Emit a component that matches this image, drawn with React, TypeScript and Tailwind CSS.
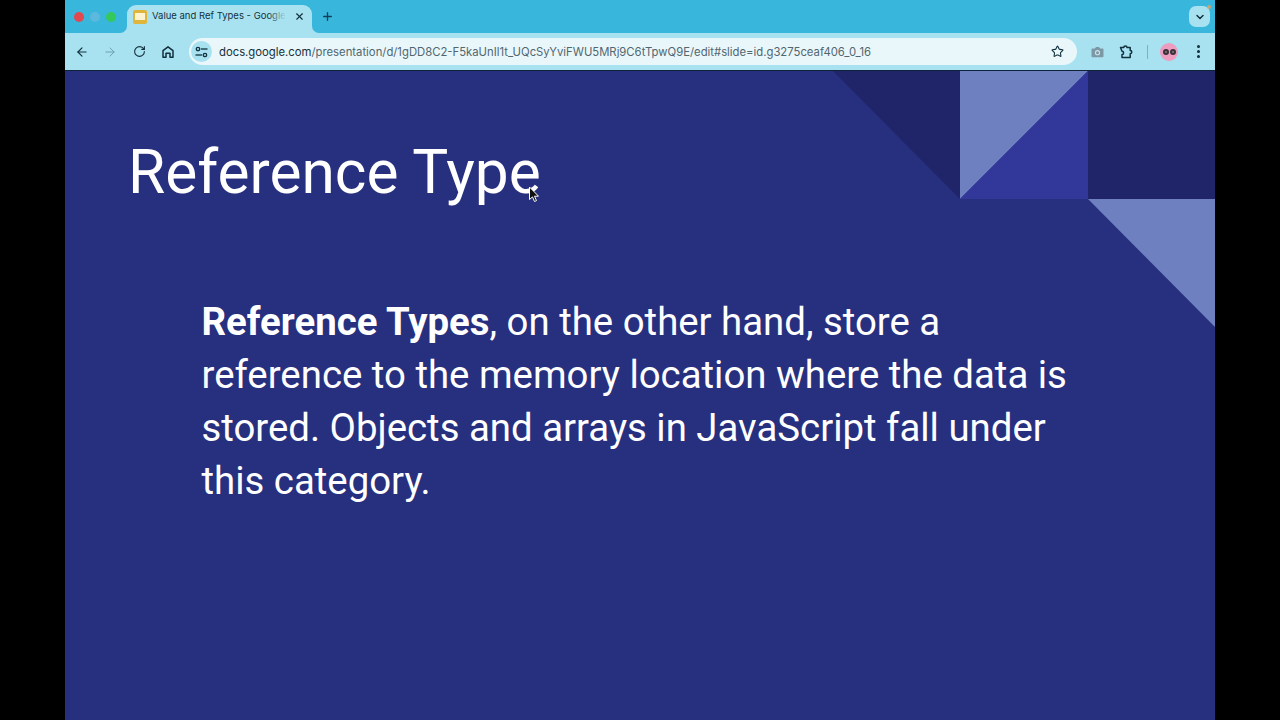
import React from 'react';
import { ArrowLeft, ArrowRight, RotateCw, Star, X, Plus, ChevronDown } from 'lucide-react';

const HomeIcon = () => (
  <svg width="14" height="14" viewBox="0 0 14 14" fill="none" stroke="#10303c" strokeWidth="1.5" strokeLinejoin="round">
    <path d="M2 12.2V5.6L7 1.8l5 3.8v6.6H9V8.2H5v4z" />
  </svg>
);

const SiteIcon = () => (
  <svg width="13" height="12" viewBox="0 0 13 12" fill="none" stroke="#10303c" strokeWidth="1.3">
    <circle cx="3" cy="3" r="1.7" />
    <path d="M6 3h6.5" />
    <circle cx="10" cy="9" r="1.7" />
    <path d="M0.5 9H7" />
  </svg>
);

const PuzzleIcon = () => (
  <svg width="15" height="15" viewBox="0 0 15 15" fill="none" stroke="#10303c" strokeWidth="1.5" strokeLinejoin="round">
    <path d="M1.5 3.5h3.3a1.6 1.6 0 1 1 3.2 0h3.2v3a1.6 1.6 0 1 1 0 3.2v3.8H3v-3a1.6 1.6 0 1 0 0-3.2z" />
  </svg>
);

const CameraIcon = () => (
  <svg width="13" height="12" viewBox="0 0 13 12">
    <path d="M1.5 2.5h2.4L5 1h3l1.1 1.5h2.4a1 1 0 0 1 1 1v6.7a1 1 0 0 1-1 1h-10a1 1 0 0 1-1-1V3.500a1 1 0 0 1 1-1z" fill="#7d98a4" />
    <circle cx="6.500" cy="6.700" r="2.600" fill="#c4e3ec" />
    <circle cx="6.500" cy="6.700" r="1.500" fill="#7d98a4" />
  </svg>
);

const SlidesIcon = () => (
  <div className="flex h-[14px] w-[14px] items-center justify-center rounded-[2px] bg-[#dfb53c]">
    <div className="h-[7px] w-[10px] bg-[#fdf3cf]" />
  </div>
);

const TabCorner = ({ flip }: { flip?: boolean }) => (
  <svg className={flip ? 'absolute bottom-0 right-[-7px]' : 'absolute bottom-0 left-[-7px]'} width="7" height="7" viewBox="0 0 7 7">
    <path d={flip ? 'M0 0v7h7A7 7 0 0 1 0 0z' : 'M7 0v7H0A7 7 0 0 0 7 0z'} fill="#a8e2f0" />
  </svg>
);

const Decor = () => (
  <svg className="absolute right-0 top-0" width="382" height="256" viewBox="0 0 382 256">
    <polygon points="0,0 127,0 127,128" fill="#1f2568" />
    <polygon points="127,0 255,0 127,128" fill="#6e80c0" />
    <polygon points="255,0 255,128 127,128" fill="#31389a" />
    <rect x="255" y="0" width="127" height="128" fill="#1f2568" />
    <polygon points="255,128 382,128 382,256" fill="#6e80c0" />
  </svg>
);

const Cursor = () => (
  <svg className="absolute left-[463px] top-[115px]" width="12" height="18" viewBox="0 0 12 18">
    <path d="M1.5 1v12.5l3-2.6 2 4.6 2-.9-2-4.4h4z" fill="#111" stroke="#fff" strokeWidth="1" />
  </svg>
);

export default function App() {
  return (
    <div className="flex h-[720px] w-[1280px] justify-center overflow-hidden bg-black font-['Roboto',sans-serif]">
      <div className="flex w-[1150px] flex-col">
        <div className="flex h-[33px] items-start bg-[#38b6dc] pl-[9px] pr-[5px]">
          <div className="flex h-[33px] items-center gap-[6px]">
            <div className="h-[10px] w-[10px] rounded-full bg-[#e0494f]" />
            <div className="h-[10px] w-[10px] rounded-full bg-[#5cb8dc]" />
            <div className="h-[10px] w-[10px] rounded-full bg-[#35c85a]" />
          </div>
          <div className="relative ml-[11px] mt-[5px] flex h-[28px] w-[185px] items-center rounded-t-[9px] bg-[#a8e2f0] pb-[5px] pl-[6px] pr-[7px]">
            <TabCorner />
            <TabCorner flip />
            <SlidesIcon />
            <span className="relative ml-[5px] whitespace-nowrap font-['Inter',sans-serif] text-[9.5px] text-[#13323e]">
              Value and Ref Types - Google
              <span className="absolute right-0 top-0 h-full w-[18px] bg-gradient-to-r from-transparent to-[#a8e2f0]" />
            </span>
            <X size={11} strokeWidth={2.5} className="ml-auto text-[#13323e]" />
          </div>
          <div className="ml-[9px] flex h-[33px] items-center">
            <Plus size={13} strokeWidth={2.5} className="text-[#10405a]" />
          </div>
          <div className="relative ml-auto mt-[6px] flex h-[21px] w-[21px] items-center justify-center rounded-[7px] bg-[#a8e2f0]">
            <ChevronDown size={12} strokeWidth={3} className="text-[#13323e]" />
            <div className="absolute right-[-1px] top-[-1px] h-[4px] w-[4px] rounded-full bg-[#c9a878]" />
          </div>
        </div>
        <div className="flex h-[37px] items-center bg-[#a8e2f0] pl-[10px] pr-[10px]">
          <ArrowLeft size={14} strokeWidth={2} className="text-[#10303c]" />
          <ArrowRight size={14} strokeWidth={1.6} className="ml-[14px] text-[#6b9bac]" />
          <RotateCw size={13} strokeWidth={2} className="ml-[16px] text-[#10303c]" />
          <div className="ml-[15px]"><HomeIcon /></div>
          <div className="ml-[14px] flex h-[27px] w-[888px] items-center rounded-full bg-[#e9f7fb] pl-[2px]">
            <div className="flex h-[21px] w-[21px] items-center justify-center rounded-full bg-[#a8e2f0]">
              <SiteIcon />
            </div>
            <span className="ml-[7px] mt-[1px] whitespace-nowrap font-['Inter',sans-serif] text-[11.3px] text-[#15303a]">
              docs.google.com<span className="text-[#51666f]">/presentation/d/1gDD8C2-F5kaUnIl1t_UQcSyYviFWU5MRj9C6tTpwQ9E/edit#slide=id.g3275ceaf406_0_16</span>
            </span>
            <Star size={13} strokeWidth={2} className="ml-auto mr-[13px] text-[#10303c]" />
          </div>
          <div className="ml-[14px]"><CameraIcon /></div>
          <div className="ml-[15px]"><PuzzleIcon /></div>
          <div className="ml-[13px] h-[14px] w-px bg-[#7fb0c0]" />
          <div className="ml-[12px] flex h-[18px] w-[18px] items-center justify-center rounded-full bg-[#ee9cc0]">
            <div className="flex gap-px">
              <div className="h-[6px] w-[6px] rounded-full border-2 border-[#3a3038] bg-[#8a7a84]" />
              <div className="h-[6px] w-[6px] rounded-full border-2 border-[#3a3038] bg-[#8a7a84]" />
            </div>
          </div>
          <div className="ml-[19px] flex flex-col gap-[2px]">
            <div className="h-[3px] w-[3px] rounded-full bg-[#10303c]" />
            <div className="h-[3px] w-[3px] rounded-full bg-[#10303c]" />
            <div className="h-[3px] w-[3px] rounded-full bg-[#10303c]" />
          </div>
        </div>
        <div className="relative flex-1 border-t border-[#0f2238] bg-[#272f7f] text-white">
          <Decor />
          <div className="pl-[63px] pt-[62px] text-[60.4px] font-normal leading-[80px]">Reference Type</div>
          <div className="ml-[136.500px] mt-[82px] w-[880px] text-[38.37px] leading-[53px]">
            <b className="font-bold">Reference Types</b>, on the other hand, store a reference to the memory location where the data is stored. Objects and arrays in JavaScript fall under this category.
          </div>
          <Cursor />
        </div>
      </div>
    </div>
  );
}
